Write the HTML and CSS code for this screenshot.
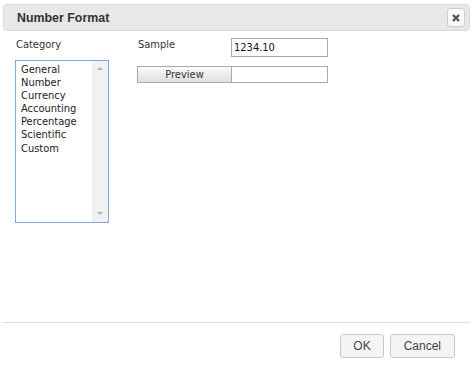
FILE: index.html
```html
<!DOCTYPE html>
<html lang="en">
<head>
  <meta charset="UTF-8" />
  <title>Number Format</title>
  <link rel="stylesheet" href="styles.css">
</head>
<body>

  <div class="dialog">
    <!-- Title bar -->
    <div class="titlebar">
      <span class="title">Number Format</span>
      <span class="close">
        <svg width="10" height="10" viewBox="0 0 10 10">
          <path d="M2 2 L8 8 M8 2 L2 8" stroke="#555" stroke-width="2.4" />
        </svg>
      </span>
    </div>

    <div class="content">
      <div class="left-col">
        <div class="label">Category</div>
        <div class="listbox">
          <ul class="items">
            <li>General</li>
            <li>Number</li>
            <li>Currency</li>
            <li>Accounting</li>
            <li>Percentage</li>
            <li>Scientific</li>
            <li>Custom</li>
          </ul>
          <div class="scrollbar">
            <span class="arrow up"></span>
            <span class="arrow down"></span>
          </div>
        </div>
      </div>

      <div class="right-col">
        <div class="row">
          <div class="label sample-label">Sample</div>
          <div class="field sample-field">1234.10</div>
        </div>
        <div class="row preview-row">
          <div class="preview-btn">Preview</div>
          <div class="field preview-field"></div>
        </div>
      </div>
    </div>

    <!-- Footer buttons -->
    <div class="footer">
      <div class="btn ok">OK</div>
      <div class="btn">Cancel</div>
    </div>
  </div>

</body>
</html>
```

FILE: styles.css
```css
* {
  box-sizing: border-box;
}
html, body {
  margin: 0;
  background: #fff;
}

.dialog {
  width: 474px;
  height: 370px;
  padding: 4px 4px 0 3px;
  display: flex;
  flex-direction: column;
  font-family: "DejaVu Sans Condensed", "DejaVu Sans", sans-serif;
  font-size: 11px;
  color: #222;
}

/* Title bar */
.titlebar {
  height: 27px;
  background: #e8e8e8;
  border: 1px solid #dadada;
  border-radius: 4px;
  display: flex;
  align-items: center;
  justify-content: space-between;
  padding: 0 4px 0 13px;
}
.title {
  font-family: "Liberation Sans", Arial, sans-serif;
  font-weight: 700;
  font-size: 12.4px;
  color: #333;
}
.close {
  width: 18px;
  height: 19px;
  border: 1px solid #cfcfcf;
  border-radius: 3px;
  background: #f7f7f7;
  display: flex;
  align-items: center;
  justify-content: center;
}

/* Main area */
.content {
  flex: 1;
  display: flex;
  gap: 28px;
  padding: 7px 0 0 12px;
}
.left-col {
  width: 94px;
}
.label {
  line-height: 14px;
  padding-left: 1px;
  color: #333;
}
.left-col .label {
  margin-bottom: 8px;
}

.listbox {
  height: 163px;
  border: 1px solid #86a6d6;
  display: flex;
  background: #fff;
}
.items {
  list-style: none;
  margin: 0;
  padding: 2px 0 0 5px;
  flex: 1;
  line-height: 13.1px;
  color: #222;
}
.scrollbar {
  width: 16px;
  background: #f1f1f1;
  position: relative;
}
.arrow {
  position: absolute;
  left: 5px;
  width: 0;
  height: 0;
  border-left: 3px solid transparent;
  border-right: 3px solid transparent;
}
.arrow.up {
  top: 6px;
  border-bottom: 3px solid #b0b0b0;
}
.arrow.down {
  bottom: 7px;
  border-top: 3px solid #b0b0b0;
}

.right-col {
  display: flex;
  flex-direction: column;
  gap: 9px;
}
.row {
  display: flex;
}
.sample-label {
  width: 94px;
  line-height: 13px;
}
.field {
  width: 97px;
  border: 1px solid #a9a9a9;
  background: #fff;
}
.sample-field {
  height: 19px;
  line-height: 17px;
  padding-left: 2px;
  color: #111;
}
.preview-btn {
  width: 94px;
  height: 17px;
  border: 1px solid #aaa;
  border-right: none;
  background: linear-gradient(#fafafa, #dfdfdf);
  text-align: center;
  line-height: 15px;
  color: #333;
}
.preview-field {
  height: 17px;
}

/* Footer */
.footer {
  height: 48px;
  border-top: 1px solid #dedede;
  display: flex;
  justify-content: flex-end;
  gap: 6px;
  padding: 11px 15px 0 0;
}
.btn {
  height: 24px;
  padding: 0 13px;
  border: 1px solid #c9c9c9;
  border-radius: 3px;
  background: #f4f4f4;
  font-family: "Liberation Sans", Arial, sans-serif;
  font-size: 12px;
  line-height: 22px;
  color: #444;
}
.btn.ok {
  padding: 0 12px;
}
```
